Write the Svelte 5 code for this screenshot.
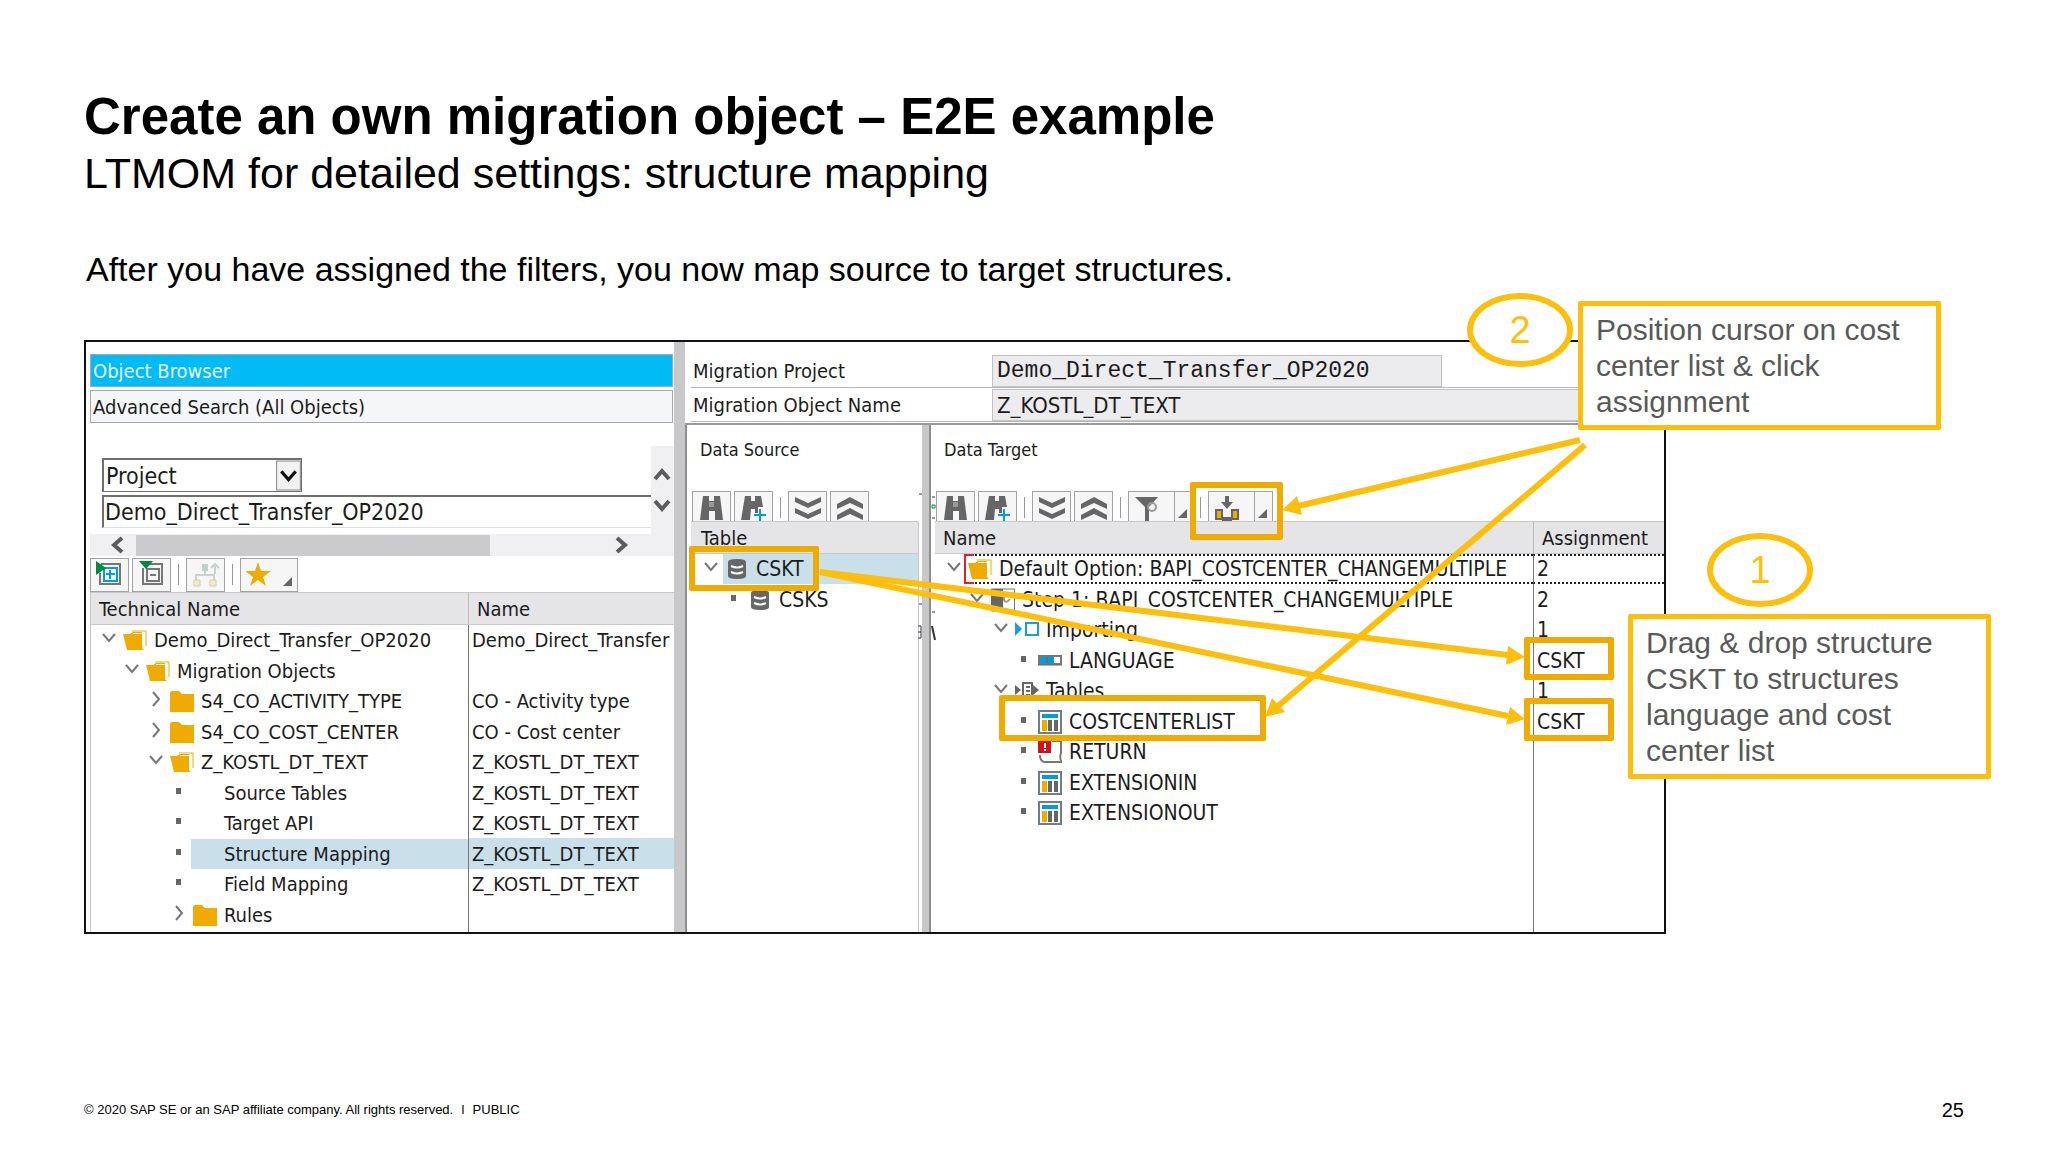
<script lang="ts">
  interface Row {
    level: number
    icon: string
    state: string
    label: string
    value: string
    selected?: boolean
    focus?: boolean
  }

  const objectRows: Row[] = [
    { level: 0, icon: 'open', state: 'down', label: 'Demo_Direct_Transfer_OP2020', value: 'Demo_Direct_Transfer' },
    { level: 1, icon: 'open', state: 'down', label: 'Migration Objects', value: '' },
    { level: 2, icon: 'closed', state: 'right', label: 'S4_CO_ACTIVITY_TYPE', value: 'CO - Activity type' },
    { level: 2, icon: 'closed', state: 'right', label: 'S4_CO_COST_CENTER', value: 'CO - Cost center' },
    { level: 2, icon: 'open', state: 'down', label: 'Z_KOSTL_DT_TEXT', value: 'Z_KOSTL_DT_TEXT' },
    { level: 3, icon: 'none', state: 'leaf', label: 'Source Tables', value: 'Z_KOSTL_DT_TEXT' },
    { level: 3, icon: 'none', state: 'leaf', label: 'Target API', value: 'Z_KOSTL_DT_TEXT' },
    { level: 3, icon: 'none', state: 'leaf', label: 'Structure Mapping', value: 'Z_KOSTL_DT_TEXT', selected: true },
    { level: 3, icon: 'none', state: 'leaf', label: 'Field Mapping', value: 'Z_KOSTL_DT_TEXT' },
    { level: 3, icon: 'closed', state: 'right', label: 'Rules', value: '' },
  ]

  const sourceRows: Row[] = [
    { level: 0, icon: 'db', state: 'down', label: 'CSKT', value: '', selected: true },
    { level: 1, icon: 'db', state: 'leaf', label: 'CSKS', value: '' },
  ]

  const targetRows: Row[] = [
    { level: 0, icon: 'open', state: 'down', label: 'Default Option: BAPI_COSTCENTER_CHANGEMULTIPLE', value: '2', focus: true },
    { level: 1, icon: 'step', state: 'down', label: 'Step 1: BAPI_COSTCENTER_CHANGEMULTIPLE', value: '2' },
    { level: 2, icon: 'import', state: 'down', label: 'Importing', value: '1' },
    { level: 3, icon: 'field', state: 'leaf', label: 'LANGUAGE', value: 'CSKT' },
    { level: 2, icon: 'tables', state: 'down', label: 'Tables', value: '1' },
    { level: 3, icon: 'grid', state: 'leaf', label: 'COSTCENTERLIST', value: 'CSKT' },
    { level: 3, icon: 'return', state: 'leaf', label: 'RETURN', value: '' },
    { level: 3, icon: 'grid', state: 'leaf', label: 'EXTENSIONIN', value: '' },
    { level: 3, icon: 'grid', state: 'leaf', label: 'EXTENSIONOUT', value: '' },
  ]

  let scope = $state('Project')
  let project = $state('Demo_Direct_Transfer_OP2020')
</script>

{#snippet icon(name: string)}
  <svg class="icon" viewBox="0 0 24 24" aria-hidden="true">
    {#if name === 'open'}
      <path d="M9 3h14v15" fill="none" stroke="#f0ab00" stroke-width="1" />
      <path d="M0 6h7l3-2h9v16l2 2H4z" fill="#f0ab00" />
      <path d="M10 5.500h10.500v14" fill="none" stroke="#fff" stroke-width="1" />
    {:else if name === 'closed'}
      <path d="M0 4q0-2 2-2h7l3 3h12v18H0z" fill="#f0ab00" />
    {:else if name === 'db'}
      <path d="M3 5q0-3 9-3t9 3v14q0 3-9 3t-9-3z" fill="#666" />
      <path d="M6 9q6 3 12 0M6 15q6 3 12 0" fill="none" stroke="#fff" stroke-width="2" />
    {:else if name === 'step'}
      <path d="M.5 1h23v22H.5z" fill="#fff" stroke="#777" />
      <path d="M0 1h12v22H0z" fill="#666" />
      <path d="M13 8v4q2 4 6-1" fill="none" stroke="#999" stroke-width="2" />
    {:else if name === 'import'}
      <path d="M0 4l7 7-7 7z" fill="#189fe0" />
      <path d="M11 5h12v12H11z" fill="#fff" stroke="#189fe0" stroke-width="2" />
    {:else if name === 'field'}
      <path d="M1 7h22v8H1z" fill="#fff" stroke="#777" stroke-width="2" />
      <path d="M2 8h14v6H2z" fill="#009de0" />
      <path d="M9 8v6M0 16h24" stroke="#666" />
    {:else if name === 'tables'}
      <path d="M0 6l6 5-6 5zM18 6l6 5-6 5z" fill="#666" />
      <path d="M8 4h9v15H8z" fill="#fff" stroke="#666" stroke-width="2" />
      <path d="M11 8h4M11 12h4M11 16h4" stroke="#666" stroke-width="2" />
    {:else if name === 'grid'}
      <path d="M1 1h22v22H1z" fill="#fff" stroke="#6f7d87" stroke-width="2" />
      <path d="M4 4h16v4H4z" fill="#009de0" />
      <path d="M4 10h5v11H4z" fill="#f0ab00" />
      <path d="M10 10h4v11h-4zM16 10h4v11h-4z" fill="#666" />
    {:else if name === 'return'}
      <path d="M2 15q0 6 4 7h18q-3-3-1-9V1H14" fill="#fff" stroke="#777" stroke-width="2" />
      <path d="M0 1h13v12H0z" fill="#d0121b" />
      <path d="M7 3v5M7 9v2" stroke="#fff" stroke-width="2" />
    {/if}
  </svg>
{/snippet}

{#snippet twisty(state: string)}
  <svg class="twisty" viewBox="0 0 24 24" aria-hidden="true">
    {#if state === 'down'}
      <path d="M6 6l6 7 6-7" fill="none" stroke="#777" stroke-width="2" />
    {:else if state === 'right'}
      <path d="M9 3l6 7-6 7" fill="none" stroke="#777" stroke-width="2" />
    {:else}
      <path d="M9 7h5v6H9z" fill="#666" />
    {/if}
  </svg>
{/snippet}

{#snippet nameCell(row: Row)}
  <div class="node level-{row.level}">
    {@render twisty(row.state)}
    <span class="node-body" class:selected={row.selected} class:focus={row.focus}>
      {@render icon(row.icon)}
      <span>{row.label}</span>
    </span>
  </div>
{/snippet}

{#snippet corner()}
  <svg class="corner" viewBox="0 0 10 10" aria-hidden="true"><path d="M10 0v10H0z" fill="#666" /></svg>
{/snippet}

{#snippet tool(name: string)}
  <button class="tool" type="button" aria-label={name}>
    <svg viewBox="0 0 28 28" aria-hidden="true">
      {#if name === 'Find'}
        <path d="M5 3h6v5h5V3h6l3 24h-8v-9h-6v9H2z" fill="#666" />
        <path d="M11 9h5v5h-5z" fill="#999" />
      {:else if name === 'Find next'}
        <path d="M5 3h6v5h4V3h6l2 11h-5v6h-3v-4h-4l-1 11H1z" fill="#666" />
        <path d="M20 16v12M14 22h12" stroke="#009de0" stroke-width="2" />
      {:else if name === 'Expand all'}
        <path d="M1 4l13 6 13-6v5l-13 6L1 9zM1 15l13 6 13-6v5l-13 6-13-6z" fill="#666" />
      {:else if name === 'Collapse all'}
        <path d="M1 11l13-7 13 7v5l-13-6-13 6zM1 22l13-7 13 7v5l-13-6-13 6z" fill="#666" />
      {:else if name === 'Expand node'}
        <path d="M5 4h19v20H4V13" fill="none" stroke="#777" stroke-width="2" />
        <path d="M8 8h13v13H8zM14 10v9M10 14h9" fill="none" stroke="#009de0" stroke-width="2" />
        <path d="M0 1l10 7-10 7z" fill="#008a3b" />
      {:else if name === 'Collapse node'}
        <path d="M10 4h14v20H5V8" fill="none" stroke="#777" stroke-width="2" />
        <path d="M9 9h12v12H9zM12 15h6" fill="none" stroke="#777" stroke-width="2" />
        <path d="M1 1h14l-7 8z" fill="#008a3b" />
      {:else if name === 'Hierarchy'}
        <path d="M10 4h6v7h-6z" fill="#b9d3c6" />
        <path d="M23 14V4M19 8l4-4 4 4M4 20v-5h18v5M13 11v4" fill="none" stroke="#c9d2d0" stroke-width="2" />
        <path d="M2 20h6v6H2zM18 20h6v6h-6z" fill="#f3ecc4" stroke="#cfcdb6" />
      {/if}
    </svg>
  </button>
{/snippet}

<main class="slide">
  <header class="heading">
    <h1>Create an own migration object – E2E example</h1>
    <p class="subtitle">LTMOM for detailed settings: structure mapping</p>
  </header>
  <p class="intro">After you have assigned the filters, you now map source to target structures.</p>

  <figure class="stage">
    <div class="window">
      <section class="browser">
        <h2 class="bar bar-active">Object Browser</h2>
        <h2 class="bar">Advanced Search (All Objects)</h2>

        <div class="search">
          <div class="search-fields">
            <div class="select-wrap">
              <select class="scope" aria-label="Search by" bind:value={scope}>
                <option>Project</option>
              </select>
              <svg class="select-arrow" viewBox="0 0 24 30" aria-hidden="true">
                <path d="M.5 1h23v28H.5z" fill="#f2f2f2" stroke="#888" />
                <path d="M5 11l7 8 7-8" fill="none" stroke="#111" stroke-width="3" />
              </svg>
            </div>
            <input class="project" type="text" aria-label="Project" bind:value={project} />
          </div>
          <div class="scroll-v">
            <svg viewBox="0 0 22 14" aria-hidden="true"><path d="M4 12l7-8 7 8" /></svg>
            <svg viewBox="0 0 22 14" aria-hidden="true"><path d="M4 2l7 8 7-8" /></svg>
          </div>
        </div>
        <div class="scroll-h">
          <svg viewBox="0 0 14 22" aria-hidden="true"><path d="M12 4l-8 7 8 7" /></svg>
          <span class="thumb"></span>
          <svg viewBox="0 0 14 22" aria-hidden="true"><path d="M2 4l8 7-8 7" /></svg>
        </div>

        <div class="toolbar toolbar-browser">
          {@render tool('Expand node')}
          {@render tool('Collapse node')}
          <span class="sep"></span>
          {@render tool('Hierarchy')}
          <span class="sep"></span>
          <button class="tool tool-menu" type="button" aria-label="Favorites">
            <svg viewBox="0 0 28 28" aria-hidden="true">
              <path d="M12 2l3 9h10l-8 6 3 9-8-6-8 6 3-9-8-6h10z" fill="#f0ab00" />
            </svg>
            {@render corner()}
          </button>
        </div>

        <table class="tree tree-objects">
          <thead>
            <tr><th>Technical Name</th><th>Name</th></tr>
          </thead>
          <tbody>
            {#each objectRows as row}
              <tr>
                <td>{@render nameCell(row)}</td>
                <td class:selected={row.selected}>{row.value}</td>
              </tr>
            {/each}
            <tr class="filler"><td></td><td></td></tr>
          </tbody>
        </table>
      </section>

      <section class="detail">
        <div class="fields">
          <div class="field">
            <label for="migration-project">Migration Project</label>
            <input id="migration-project" class="field-mono" type="text" value="Demo_Direct_Transfer_OP2020" readonly />
          </div>
          <div class="field">
            <label for="migration-object">Migration Object Name</label>
            <input id="migration-object" class="field-wide" type="text" value="Z_KOSTL_DT_TEXT" readonly />
          </div>
        </div>

        <div class="panes">
          <section class="pane pane-source">
            <h3>Data Source</h3>
            <div class="toolbar">
              {@render tool('Find')}
              {@render tool('Find next')}
              <span class="sep"></span>
              {@render tool('Expand all')}
              {@render tool('Collapse all')}
            </div>
            <table class="tree tree-source">
              <thead><tr><th>Table</th></tr></thead>
              <tbody>
                {#each sourceRows as row}
                  <tr><td>{@render nameCell(row)}</td></tr>
                {/each}
                <tr class="filler"><td></td></tr>
              </tbody>
            </table>
          </section>

          <section class="pane pane-target">
            <h3>Data Target</h3>
            <div class="toolbar">
              {@render tool('Find')}
              {@render tool('Find next')}
              <span class="sep"></span>
              {@render tool('Expand all')}
              {@render tool('Collapse all')}
              <span class="sep"></span>
              <button class="tool tool-split" type="button" aria-label="Filter">
                <svg viewBox="0 0 28 28" aria-hidden="true">
                  <path d="M1 4h23l-9 10v14h-4V14z" fill="#666" />
                  <circle cx="18" cy="14" r="4" fill="none" stroke="#999" stroke-width="2" />
                </svg>
                {@render corner()}
              </button>
              <span class="sep"></span>
              <button class="tool tool-split" type="button" aria-label="Assignment">
                <svg viewBox="0 0 28 28" aria-hidden="true">
                  <path d="M11 3h4v6h4l-6 7-6-7h4z" fill="#666" />
                  <path d="M2 17h6v9H2zM18 17h6v9h-6z" fill="#f0ab00" stroke="#666" stroke-width="2" />
                  <path d="M8 24h10v4H8z" fill="#666" />
                </svg>
                {@render corner()}
              </button>
            </div>
            <table class="tree tree-target">
              <thead>
                <tr><th>Name</th><th>Assignment</th></tr>
              </thead>
              <tbody>
                {#each targetRows as row}
                  <tr class:focus-row={row.focus}>
                    <td>{@render nameCell(row)}</td>
                    <td>{row.value}</td>
                  </tr>
                {/each}
                <tr class="filler"><td></td><td></td></tr>
              </tbody>
            </table>
          </section>
        </div>
      </section>
    </div>

    <!-- annotations drawn over the window -->
    <svg class="arrows" viewBox="0 0 1582 593" aria-hidden="true">
      <!-- clipped slivers of the panes behind the splitter -->
      <g stroke="#333" stroke-width="1">
        <path d="M835 154h3M848 157h3M848 178h3M835 264h3M848 272h3M834 286h3v12h-3M834 292h3" />
        <path d="M848 286l3 14" stroke-width="2" />
        <path d="M848 165h3v3h-3z" stroke="#008a3b" />
      </g>
      <g stroke="#fdbf0b" stroke-width="6">
        <path d="M736 232L1424 315" />
        <path d="M736 232L1424 376" />
        <path d="M1496 100L1214 166" />
        <path d="M1501 105L1194 366" />
      </g>
      <g fill="#fdbf0b">
        <path d="M1441 317l-19 8 2-19z" />
        <path d="M1441 379l-19 6 4-18z" />
        <path d="M1198 170l15-14 5 19z" />
        <path d="M1181 377l7-19 13 14z" />
      </g>
    </svg>
    <span class="mark mark-source"></span>
    <span class="mark mark-button"></span>
    <span class="mark mark-list"></span>
    <span class="mark mark-cell-a"></span>
    <span class="mark mark-cell-b"></span>
    <span class="step step-two">2</span>
    <p class="callout callout-two">Position cursor on cost center list &amp; click assignment</p>
    <span class="step step-one">1</span>
    <p class="callout callout-one">Drag &amp; drop structure CSKT to structures language and cost center list</p>
  </figure>

  <footer class="footer">
    <span>© 2020 SAP SE or an SAP affiliate company. All rights reserved.</span>
    <span>ǀ</span>
    <span>PUBLIC</span>
    <span class="page">25</span>
  </footer>
</main>

<style>
  :global(body) {
    margin: 0;
    background: #fff;
  }

  .slide {
    box-sizing: border-box;
    min-height: 100vh;
    padding: 88px 84px 30px;
    display: flex;
    flex-direction: column;
    font-family: 'Liberation Sans', Arial, sans-serif;
    color: #000;
  }

  h1,
  h2,
  h3,
  p {
    margin: 0;
    font-weight: 400;
  }

  h1 {
    font-size: 51px;
    line-height: 58px;
    font-weight: 700;
  }

  .subtitle {
    font-size: 43px;
    line-height: 54px;
  }

  .intro {
    margin-top: 48px;
    padding-left: 2px;
    font-size: 34px;
    line-height: 42px;
  }

  .stage {
    position: relative;
    width: 100%;
    max-width: 1582px;
    margin: 50px 0 0;
  }

  /* ---- application window ---- */
  .window {
    box-sizing: border-box;
    height: 594px;
    display: flex;
    border: 2px solid #111;
    background: #fff;
    font-family: 'DejaVu Sans Condensed', Tahoma, sans-serif;
    font-size: 20px;
    line-height: 24px;
    color: #1c1c1c;
    overflow: hidden;
  }

  .window h2 {
    font-size: 20px;
    line-height: 24px;
  }

  .window select,
  .window input {
    box-sizing: border-box;
    font: inherit;
    color: inherit;
    border-radius: 0;
    outline: none;
  }

  .browser {
    box-sizing: border-box;
    width: 599px;
    flex: none;
    padding: 12px 0 0 4px;
    border-right: 11px solid #c8c8ca;
    display: flex;
    flex-direction: column;
  }

  .bar {
    box-sizing: border-box;
    height: 33px;
    margin: 0 1px 3px 0;
    padding: 4px 2px;
    border: 1px solid #a9a9a9;
    background: #f5f6f8;
  }

  .bar-active {
    background: #00bbf5;
    color: #e8f8ff;
  }

  .search {
    display: flex;
    margin-top: 20px;
  }

  .search-fields {
    flex: 1;
    padding: 12px 0 6px 12px;
  }

  .select-wrap {
    position: relative;
    width: 200px;
    margin-bottom: 3px;
  }

  .window .scope {
    appearance: none;
    display: block;
    width: 100%;
    height: 34px;
    padding: 0 30px 0 2px;
    border: solid #6f6f6f;
    border-width: 2px 1px 1px 2px;
    background: #fff;
    font-size: 23px;
  }

  .select-arrow {
    position: absolute;
    top: 2px;
    right: 1px;
    width: 25px;
    height: 31px;
    pointer-events: none;
  }

  .window .project {
    display: block;
    width: 100%;
    height: 33px;
    padding: 0 1px;
    border: solid #6f6f6f;
    border-width: 2px 0 0 2px;
    border-bottom: 1px solid #ddd;
    background: #fff;
    font-size: 23px;
  }

  .scroll-v {
    width: 23px;
    padding-top: 21px;
    box-sizing: border-box;
    display: flex;
    flex-direction: column;
    gap: 18px;
    background: #f0eff1;
  }

  .scroll-v svg,
  .scroll-h svg {
    display: block;
    fill: none;
    stroke: #5c5c5c;
    stroke-width: 4;
  }

  .scroll-v svg {
    width: 22px;
    height: 14px;
  }

  .scroll-h {
    height: 22px;
    padding: 0 45px 0 20px;
    display: flex;
    align-items: center;
    background: #f0eff1;
  }

  .scroll-h svg {
    width: 14px;
    height: 22px;
  }

  .thumb {
    width: 354px;
    height: 21px;
    margin: 0 auto 0 12px;
    background: #cbcacc;
  }

  .toolbar {
    display: flex;
    flex: none;
    gap: 3px;
    height: 30px;
    padding-left: 1px;
    overflow: hidden;
  }

  .toolbar-browser {
    height: 34px;
    padding: 2px 0 0;
  }

  .tool {
    box-sizing: border-box;
    flex: none;
    width: 39px;
    height: 34px;
    padding: 1px 5px;
    display: flex;
    border: 1px solid #a3a3a3;
    border-radius: 0;
    background: #f6f6f7;
  }

  .tool svg {
    flex: none;
    width: 28px;
    height: 28px;
  }

  .tool .corner {
    width: 9px;
    height: 9px;
    margin-left: auto;
    align-self: flex-end;
  }

  .tool-menu {
    width: 58px;
    padding-bottom: 5px;
  }

  .tool-split {
    width: 65px;
    padding-bottom: 6px;
    background: linear-gradient(90deg, #f6f6f7 45px, #a3a3a3 45px, #a3a3a3 46px, #f6f6f7 46px);
  }

  .sep {
    flex: none;
    width: 1px;
    height: 21px;
    margin: 6px 4px;
    background: #999;
  }

  .tree {
    border-collapse: separate;
    border-spacing: 0;
    table-layout: fixed;
    width: 100%;
    flex: 1;
  }

  .tree th,
  .tree td {
    box-sizing: border-box;
  }

  .tree th {
    height: 33px;
    padding: 0 8px;
    border-top: 1px solid #c9c9c9;
    border-bottom: 1px solid #c9c9c9;
    background: #e5e4e6;
    font-weight: 400;
    text-align: left;
  }

  .tree td {
    height: 30px;
    padding: 0 3px;
    white-space: nowrap;
    overflow: hidden;
  }

  .tree tr:nth-child(even) td {
    height: 31px;
  }

  /* takes the spare height so the column lines reach the window's edge */
  .tree tr.filler:last-child td {
    height: 100%;
  }

  .tree td:first-child {
    padding: 0 0 0 7px;
  }

  .tree td + td {
    border-left: 1px solid #777;
  }

  .tree th + th {
    border-left: 1px solid #bbb;
  }

  .tree-objects {
    border-left: 1px solid #c9c9c9;
  }

  .tree-objects td:first-child {
    padding-left: 6px;
  }

  .tree-objects th:first-child {
    width: 377px;
  }

  .tree-source {
    width: 228px;
    border-right: 1px solid #c9c9c9;
  }

  .tree-source th {
    padding-left: 10px;
  }

  .tree-source td:first-child {
    padding-left: 8px;
  }

  .tree-source td,
  .tree-target td {
    font-size: 21px;
  }

  .tree-target th:last-child {
    width: 131px;
  }

  .node {
    display: flex;
    align-items: stretch;
    height: 30px;
  }

  .level-1 {
    padding-left: 23px;
  }

  .level-2 {
    padding-left: 47px;
  }

  .level-3 {
    padding-left: 70px;
  }

  .twisty {
    flex: none;
    width: 24px;
    height: 24px;
    align-self: center;
  }

  .node-body {
    box-sizing: border-box;
    flex: 1;
    display: flex;
    align-items: center;
    gap: 7px;
    padding-left: 2px;
  }

  .icon {
    flex: none;
    width: 24px;
    height: 24px;
  }

  .selected {
    background: #c9e0eb;
  }

  .focus {
    position: relative;
    border: dotted #222;
    border-width: 2px 0;
  }

  .focus::before {
    content: '';
    position: absolute;
    top: -2px;
    bottom: -2px;
    left: -2px;
    width: 8px;
    border: 2px solid #e0202e;
    border-right: 0;
  }

  .tree .focus-row td + td {
    border-top: 2px dotted #222;
    border-bottom: 2px dotted #222;
  }

  .detail {
    flex: 1;
    min-width: 0;
    display: flex;
    flex-direction: column;
  }

  .fields {
    padding: 13px 0 0 6px;
    border-bottom: 2px solid #999;
  }

  .field {
    display: flex;
    align-items: center;
    height: 32px;
    margin-bottom: 1px;
    border-bottom: 1px solid #b8b8b8;
  }

  .field label {
    width: 301px;
    padding-left: 2px;
    flex: none;
    box-sizing: border-box;
  }

  .field input {
    width: 450px;
    height: 32px;
    padding: 0 4px;
    border: 1px solid #c2c2c4;
    background: #ecebed;
  }

  .field .field-mono {
    font-family: 'Liberation Mono', monospace;
    font-size: 23px;
  }

  .field .field-wide {
    flex: 1;
    font-size: 22px;
  }

  .panes {
    flex: 1;
    display: flex;
  }

  .pane {
    box-sizing: border-box;
    padding: 13px 0 0 4px;
    border-left: 2px solid #8f8f8f;
    display: flex;
    flex-direction: column;
  }

  .pane h3 {
    padding: 0 9px;
    margin-bottom: 29px;
    font-size: 18px;
    line-height: 24px;
  }

  .pane-source {
    width: 244px;
    border-right: 7px solid #c8c8ca;
  }

  .pane-target {
    flex: 1;
    min-width: 0;
  }

  /* ---- annotations ---- */
  .arrows {
    position: absolute;
    top: 0;
    left: 0;
    width: 1582px;
    height: 593px;
    fill: none;
  }

  .mark {
    position: absolute;
    box-sizing: border-box;
    border: 6px solid #f0ab00;
    border-radius: 2px;
  }

  .mark-source {
    top: 206px;
    left: 605px;
    width: 130px;
    height: 45px;
  }

  .mark-button {
    top: 142px;
    left: 1106px;
    width: 93px;
    height: 58px;
  }

  .mark-list {
    top: 355px;
    left: 915px;
    width: 267px;
    height: 46px;
  }

  .mark-cell-a,
  .mark-cell-b {
    left: 1440px;
    width: 90px;
    height: 43px;
  }

  .mark-cell-a {
    top: 297px;
  }

  .mark-cell-b {
    top: 358px;
  }

  .step {
    position: absolute;
    box-sizing: border-box;
    width: 106px;
    height: 74px;
    border: 6px solid #fdbf0b;
    border-radius: 50%;
    background: #fff;
    color: #fdbf0b;
    font-size: 38px;
    line-height: 62px;
    text-align: center;
  }

  .step-two {
    top: -47px;
    left: 1383px;
  }

  .step-one {
    top: 193px;
    left: 1623px;
  }

  .callout {
    position: absolute;
    box-sizing: border-box;
    width: 363px;
    padding: 6px 32px 5px 13px;
    border: 5px solid #fdbf0b;
    border-radius: 2px;
    background: #fff;
    color: #595959;
    font-size: 30px;
    line-height: 36px;
  }

  .callout-two {
    top: -39px;
    left: 1494px;
  }

  .callout-one {
    top: 274px;
    left: 1544px;
  }

  .footer {
    margin-top: auto;
    display: flex;
    align-items: center;
    gap: 8px;
    font-size: 13px;
    line-height: 24px;
  }

  .page {
    margin-left: auto;
    font-size: 20px;
  }
</style>
